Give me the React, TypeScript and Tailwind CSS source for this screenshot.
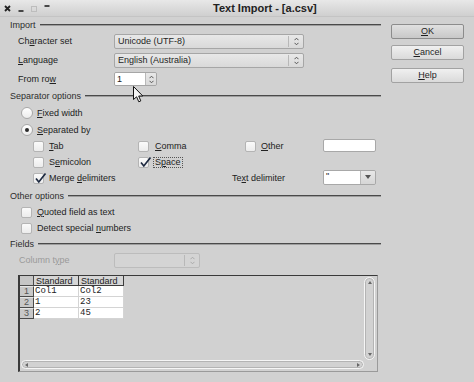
import React from "react";

const U = ({ children }: { children: React.ReactNode }) => (
  <span className="underline underline-offset-[1px] decoration-[1px]">{children}</span>
);

const UpDown = ({ color = "#555" }: { color?: string }) => (
  <svg width="5" height="9" viewBox="0 0 5 9">
    <path d="M0.5 3.2 L2.5 1.2 L4.5 3.2" fill="none" stroke={color} strokeWidth="1" />
    <path d="M0.5 5.8 L2.5 7.8 L4.5 5.8" fill="none" stroke={color} strokeWidth="1" />
  </svg>
);

const Check = () => (
  <svg className="absolute left-[0px] top-[-2px]" width="13" height="13" viewBox="0 0 13 13">
    <path d="M2 6.5 L4.8 10 L11.5 1.5" fill="none" stroke="#1d2940" strokeWidth="1.7" />
  </svg>
);

function CheckBox({ checked }: { checked?: boolean }) {
  return (
    <div className="relative w-[11px] h-[11px] shrink-0 rounded-[2px] border border-[#b4b4b4] bg-linear-to-b from-[#fafafa] to-[#ececec]">
      {checked && <Check />}
    </div>
  );
}

function Radio({ checked }: { checked?: boolean }) {
  return (
    <div className="w-[12px] h-[12px] shrink-0 rounded-full border border-[#a8a8a8] bg-linear-to-b from-[#ffffff] to-[#ececec] flex items-center justify-center">
      {checked && <div className="w-[4px] h-[4px] rounded-full bg-[#2a2a2a]" />}
    </div>
  );
}

function Header({ children }: { children: React.ReactNode }) {
  return (
    <div className="flex items-center h-[16px] pl-[10px]">
      <span className="text-[#2e2e2e]">{children}</span>
      <div className="flex-1 ml-[4px] h-[2px] border-t border-t-[#4a4a4a] border-b border-b-[#9e9e9e]" />
    </div>
  );
}

function Select({ value, className, disabled }: { value: string; className: string; disabled?: boolean }) {
  return (
    <div
      className={
        "h-[15px] rounded-[2px] border flex items-center " +
        (disabled
          ? "border-[#bcbcbc] bg-[#d4d4d4] "
          : "border-[#a6a6a6] bg-linear-to-b from-[#e8e8e8] to-[#d9d9d9] ") +
        className
      }
    >
      <span className="flex-1 pl-[3px] text-[#1e1e1e] truncate">{value}</span>
      <div className="w-[15px] h-[11px] border-l border-l-[#b8b8b8] flex items-center justify-center">
        <UpDown color={disabled ? "#aaa" : "#555"} />
      </div>
    </div>
  );
}

function Button({ children, def }: { children: React.ReactNode; def?: boolean }) {
  return (
    <div
      className={
        "w-[73px] h-[15px] rounded-[2px] border flex items-center justify-center text-[#1e1e1e] " +
        (def
          ? "border-[#8c8c8c] bg-linear-to-b from-[#e0e0e0] to-[#c8c8c8]"
          : "border-[#a2a2a2] bg-linear-to-b from-[#f0f0f0] to-[#dadada]")
      }
    >
      {children}
    </div>
  );
}

const rows = [
  ["1", "Col1", "Col2"],
  ["2", "1", "23"],
  ["3", "2", "45"],
];

export default function App() {
  return (
    <div
      className="relative w-[474px] h-[382px] bg-[#d1d1d1] text-[9px] leading-[11px] text-[#222] overflow-hidden"
      style={{ fontFamily: '"Liberation Sans", Arial, sans-serif' }}
    >
      {/* Title bar */}
      <div className="h-[17px] flex items-center bg-linear-to-b from-[#e8e8e8] to-[#cfcfcf] border-b border-b-[#c4c4c4]">
        <div className="flex items-center w-[60px] pl-[4px] gap-[7px]">
          <svg width="7" height="7" viewBox="0 0 7 7">
            <path d="M1 1 L6 6 M6 1 L1 6" stroke="#222" strokeWidth="1.8" />
          </svg>
          <svg width="6" height="7" viewBox="0 0 6 7">
            <path d="M0.5 6 L5.5 6" stroke="#222" strokeWidth="1.6" />
          </svg>
          <svg width="6" height="7" viewBox="0 0 6 7">
            <rect x="0.5" y="1.5" width="5" height="5" fill="none" stroke="#bdbdbd" strokeWidth="1" />
          </svg>
          <svg width="6" height="7" viewBox="0 0 6 7">
            <path d="M0.5 1 L5.5 1" stroke="#222" strokeWidth="1.6" />
          </svg>
        </div>
        <div className="ml-[153px] text-[11px] font-bold text-[#222]">Text Import - [a.csv]</div>
      </div>

      <div className="flex">
        {/* Left column */}
        <div className="w-[381px] flex flex-col">
          <Header>Import</Header>
          <div className="flex items-center h-[16px]">
            <span className="pl-[18px] w-[114px]">
              Ch<U>a</U>racter set
            </span>
            <Select value="Unicode (UTF-8)" className="w-[190px]" />
          </div>
          <div className="flex items-center h-[16px] mt-[3px]">
            <span className="pl-[18px] w-[114px]">
              <U>L</U>anguage
            </span>
            <Select value="English (Australia)" className="w-[190px]" />
          </div>
          <div className="flex items-center h-[16px] mt-[3px]">
            <span className="pl-[18px] w-[114px]">
              From ro<U>w</U>
            </span>
            <div className="flex h-[14px] w-[43px] rounded-[2px] border border-[#a6a6a6] overflow-hidden">
              <div className="flex-1 bg-white pl-[2px] flex items-center">1</div>
              <div className="w-[11px] border-l border-l-[#b8b8b8] bg-linear-to-b from-[#e8e8e8] to-[#d9d9d9] flex items-center justify-center">
                <UpDown />
              </div>
            </div>
          </div>

          <div className="mt-[1px]">
            <Header>Separator options</Header>
          </div>
          <div className="flex items-center h-[16px] mt-[1px] pl-[21px] gap-[4px]">
            <Radio />
            <span>
              <U>F</U>ixed width
            </span>
          </div>
          <div className="flex items-center h-[16px] mt-[1px] pl-[21px] gap-[4px]">
            <Radio checked />
            <span>
              <U>S</U>eparated by
            </span>
          </div>
          <div className="flex items-center h-[16px] pl-[33px]">
            <div className="w-[105px] flex items-center gap-[5px]">
              <CheckBox />
              <span>
                <U>T</U>ab
              </span>
            </div>
            <div className="w-[107px] flex items-center gap-[6px]">
              <CheckBox />
              <span>
                <U>C</U>omma
              </span>
            </div>
            <div className="w-[131px] flex items-center gap-[5px]">
              <CheckBox />
              <span className="flex-1">
                <U>O</U>ther
              </span>
              <div className="w-[53px] h-[13px] self-start -mt-[2px] rounded-[2px] border border-[#a8a8a8] bg-white" />
            </div>
          </div>
          <div className="flex items-center h-[16px] pl-[33px]">
            <div className="w-[105px] flex items-center gap-[5px]">
              <CheckBox />
              <span>
                S<U>e</U>micolon
              </span>
            </div>
            <div className="w-[107px] flex items-center gap-[4px]">
              <CheckBox checked />
              <span className="border border-dotted border-[#555] px-[1px] leading-[9px] py-[0px]">
                S<U>p</U>ace
              </span>
            </div>
          </div>
          <div className="flex items-center h-[16px] pl-[33px]">
            <div className="w-[199px] flex items-center gap-[5px]">
              <CheckBox checked />
              <span>
                Merge <U>d</U>elimiters
              </span>
            </div>
            <span className="w-[91px]">
              Te<U>x</U>t delimiter
            </span>
            <div className="w-[53px] h-[15px] -mt-[2px] flex rounded-[2px] border border-[#a8a8a8] overflow-hidden">
              <div className="flex-1 bg-white pl-[2px] leading-[10px]">"</div>
              <div className="w-[15px] border-l border-l-[#b8b8b8] bg-linear-to-b from-[#e8e8e8] to-[#d6d6d6] flex items-center justify-center">
                <svg width="6" height="4" viewBox="0 0 6 4">
                  <path d="M0 0 L6 0 L3 4 Z" fill="#555" />
                </svg>
              </div>
            </div>
          </div>

          <div className="mt-[2px]">
            <Header>Other options</Header>
          </div>
          <div className="flex items-center h-[16px] pl-[21px] gap-[5px]">
            <CheckBox />
            <span>
              <U>Q</U>uoted field as text
            </span>
          </div>
          <div className="flex items-center h-[16px] pl-[21px] gap-[5px]">
            <CheckBox />
            <span>
              Detect special <U>n</U>umbers
            </span>
          </div>

          <Header>Fields</Header>
          <div className="flex items-center h-[16px]">
            <span className="pl-[19px] w-[114px] text-[#9a9a9a]">
              Column t<U>y</U>pe
            </span>
            <Select value="" className="w-[86px]" disabled />
          </div>

          {/* Table box */}
          <div className="ml-[18px] mt-[7px] w-[360px] h-[97px] border-t border-l-2 border-[#3a3a3a] border-r border-b border-r-[#9a9a9a] border-b-[#9a9a9a] flex flex-col">
            <div className="flex flex-1 min-h-0">
              <div className="flex-1">
                <div className="grid grid-cols-[14px_45px_45px] grid-rows-[10px_11px_11px_11px]">
                  <div className="bg-[#c6c6c6] border-r border-b border-[#4a4a4a]" />
                  <div className="bg-[#d6d6d6] border-r border-b border-[#3c3c3c] pl-[2px] leading-[10px]">Standard</div>
                  <div className="bg-[#d6d6d6] border-r border-b border-[#3c3c3c] pl-[2px] leading-[10px]">Standard</div>
                  {rows.map((r) => (
                    <React.Fragment key={r[0]}>
                      <div className="bg-[#c8c8c8] border-t border-t-[#e6e6e6] border-r border-b border-r-[#4a4a4a] border-b-[#4a4a4a] text-center text-[#555] leading-[9px]">
                        {r[0]}
                      </div>
                      <div
                        className="bg-white border-r border-b border-[#d4d4d4] pl-[1px] leading-[10px]"
                        style={{ fontFamily: '"Liberation Mono", "DejaVu Sans Mono", monospace' }}
                      >
                        {r[1]}
                      </div>
                      <div
                        className="bg-white border-r border-b border-[#d4d4d4] pl-[1px] leading-[10px]"
                        style={{ fontFamily: '"Liberation Mono", "DejaVu Sans Mono", monospace' }}
                      >
                        {r[2]}
                      </div>
                    </React.Fragment>
                  ))}
                </div>
              </div>
              <div className="w-[13px] pt-[1px] pr-[2px] flex">
                <div className="w-[10px] flex-1 rounded-full border border-[#f6f6f6] bg-[#d2d2d2] shadow-[inset_0_0_0_1px_#b4b4b4] flex flex-col items-center justify-between py-[3px]">
                  <svg width="4" height="3" viewBox="0 0 4 3">
                    <path d="M0 3 L2 0 L4 3 Z" fill="#666" />
                  </svg>
                  <svg width="4" height="3" viewBox="0 0 4 3">
                    <path d="M0 0 L4 0 L2 3 Z" fill="#666" />
                  </svg>
                </div>
              </div>
            </div>
            <div className="h-[11px] pl-[1px] pr-[13px] pb-[2px] flex">
              <div className="flex-1 rounded-full border border-[#f6f6f6] bg-[#d2d2d2] shadow-[inset_0_0_0_1px_#b4b4b4] flex items-center justify-between px-[3px]">
                <svg width="3" height="4" viewBox="0 0 3 4">
                  <path d="M3 0 L3 4 L0 2 Z" fill="#666" />
                </svg>
                <svg width="3" height="4" viewBox="0 0 3 4">
                  <path d="M0 0 L0 4 L3 2 Z" fill="#666" />
                </svg>
              </div>
            </div>
          </div>
        </div>

        {/* Right column buttons */}
        <div className="ml-[10px] flex flex-col pt-[7px]">
          <Button def>
            <U>O</U>K
          </Button>
          <div className="mt-[6px]">
            <Button>
              <U>C</U>ancel
            </Button>
          </div>
          <div className="mt-[8px]">
            <Button>
              <U>H</U>elp
            </Button>
          </div>
        </div>
      </div>

      {/* Mouse cursor */}
      <svg className="absolute left-[133px] top-[86px]" width="12" height="18" viewBox="0 0 12 18">
        <path
          d="M0.5 0.5 L0.5 13.5 L3.6 10.8 L5.8 15.8 L7.8 14.9 L5.7 10 L9.8 10 Z"
          fill="#f4f4f4"
          stroke="#111"
          strokeWidth="1"
        />
      </svg>
    </div>
  );
}
